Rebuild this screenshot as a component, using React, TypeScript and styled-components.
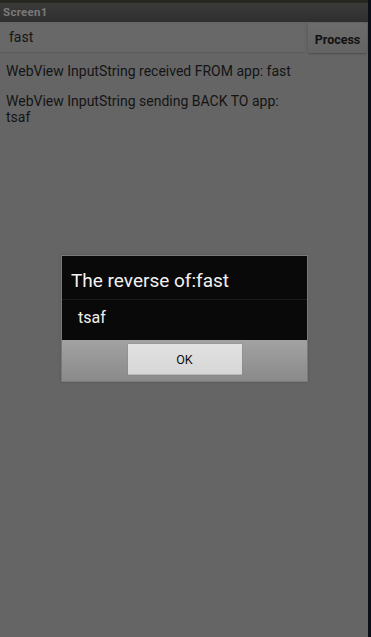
import React from "react";
import styled, { createGlobalStyle } from "styled-components";

const Global = createGlobalStyle`
  html, body { margin: 0; padding: 0; background: #656565; }
  body { font-family: Roboto, "Noto Sans", sans-serif; }
  * { box-sizing: border-box; }
`;

const Page = styled.div`
  width: 371px;
  height: 637px;
  display: flex;
  position: relative;
  overflow: hidden;
`;

const Main = styled.div`
  flex: 1;
  display: flex;
  flex-direction: column;
  background: #656565;
`;

const EdgeStrip = styled.div`
  width: 3px;
  background: #0b0f18;
`;

const StatusStrip = styled.div`
  height: 3px;
  background: #26271f;
`;

const TitleBar = styled.div`
  height: 19px;
  background: linear-gradient(#3a3a3a, #2f2f2f);
  color: #7a7a7a;
  font-weight: bold;
  font-size: 11.5px;
  line-height: 19px;
  padding-left: 3px;
  letter-spacing: 0.3px;
`;

const InputRow = styled.div`
  display: flex;
  align-items: stretch;
  gap: 4px;
  padding: 1px 1px 2px 0;
  height: 33px;
`;

const Field = styled.div`
  flex: 1;
  background: #686868;
  border-bottom: 1px solid #5a5a5a;
  color: #141414;
  font-size: 14px;
  padding: 6px 0 0 9px;
`;

const Button = styled.div`
  width: 59px;
  background: linear-gradient(#6c6c6c, #646464);
  border-radius: 2px;
  box-shadow: 0 1px 2px #4c4c4c;
  color: #111;
  font-weight: bold;
  font-size: 12.5px;
  display: flex;
  align-items: center;
  justify-content: center;
  padding-top: 3px;
`;

const Label = styled.div`
  color: #141414;
  font-size: 14px;
  line-height: 16px;
  padding: 0 6px;
  margin-top: ${(p: { $top: number }) => p.$top}px;
`;

const Dialog = styled.div`
  position: absolute;
  left: 61px;
  top: 255px;
  width: 247px;
  border: 1px solid #7a7a7a;
  box-shadow: 0 0 2px #555;
  display: flex;
  flex-direction: column;
`;

const DialogTitle = styled.div`
  background: #090909;
  color: #f2f2f2;
  font-size: 19px;
  height: 44px;
  padding: 13px 0 0 9px;
  border-bottom: 1px solid #1b1b1b;
`;

const DialogMessage = styled.div`
  background: #090909;
  color: #efefef;
  font-size: 16px;
  height: 40px;
  padding: 8px 0 0 16px;
`;

const ButtonBar = styled.div`
  background: linear-gradient(#a2a2a2, #8a8a8a);
  height: 41px;
  display: flex;
  justify-content: center;
  padding-top: 4px;
`;

const OkButton = styled.div`
  width: 114px;
  height: 31px;
  background: linear-gradient(#e2e2e2, #d6d6d6);
  border-bottom: 1px solid #b8b8b8;
  box-shadow: 0 0 1px #777;
  color: #111;
  font-size: 12.5px;
  display: flex;
  align-items: center;
  justify-content: center;
`;

export default function App() {
  return (
    <>
      <Global />
      <Page>
        <Main>
          <StatusStrip />
          <TitleBar>Screen1</TitleBar>
          <InputRow>
            <Field>fast</Field>
            <Button>Process</Button>
          </InputRow>
          <Label $top={8}>WebView InputString received FROM app: fast</Label>
          <Label $top={14}>
            WebView InputString sending BACK TO app:
            <br />
            tsaf
          </Label>
        </Main>
        <EdgeStrip />
        <Dialog>
          <DialogTitle>The reverse of:fast</DialogTitle>
          <DialogMessage>tsaf</DialogMessage>
          <ButtonBar>
            <OkButton>OK</OkButton>
          </ButtonBar>
        </Dialog>
      </Page>
    </>
  );
}
